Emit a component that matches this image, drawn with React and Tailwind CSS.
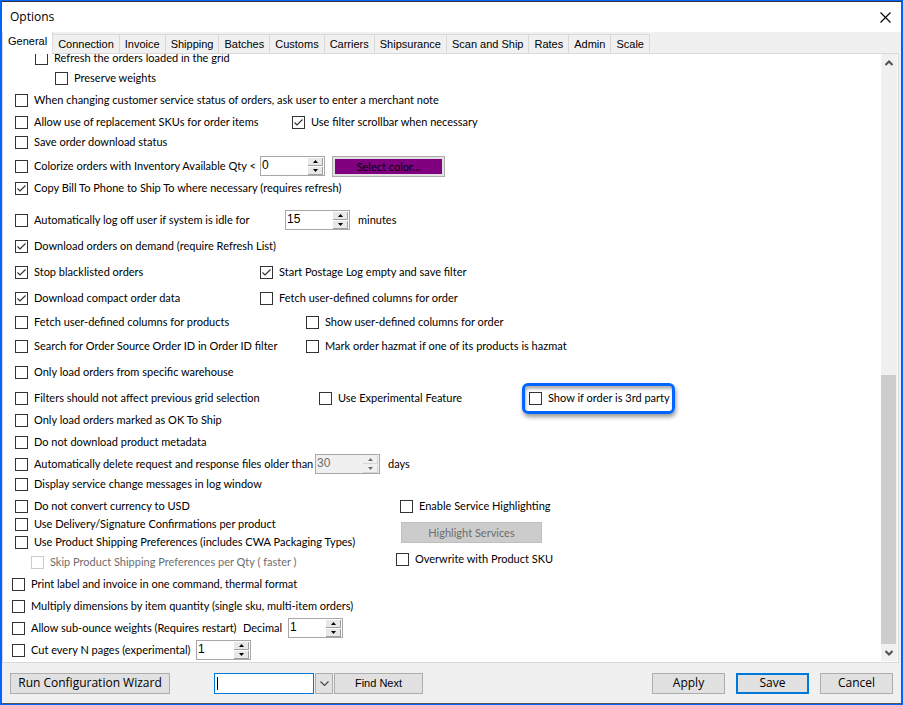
import clsx from "clsx";
import { useState } from "react";

const tabs = [
  "General",
  "Connection",
  "Invoice",
  "Shipping",
  "Batches",
  "Customs",
  "Carriers",
  "Shipsurance",
  "Scan and Ship",
  "Rates",
  "Admin",
  "Scale",
];

function Option({ label, className, checked = false, disabled = false }) {
  return (
    <label
      className={clsx(
        "flex shrink-0 items-center gap-1.5 whitespace-nowrap",
        disabled && "text-[#6d6d6d]",
        className
      )}
    >
      <span className="relative flex size-[13px]">
        <input
          type="checkbox"
          defaultChecked={checked}
          disabled={disabled}
          className="peer size-[13px] appearance-none border border-[#333333] bg-white disabled:border-[#cccccc]"
        />
        <svg
          viewBox="0 0 13 13"
          className="pointer-events-none absolute inset-0 hidden size-[13px] peer-checked:block"
          fill="none"
          stroke="#333333"
          strokeWidth="1.2"
        >
          <path d="M2.5 6.5 L5 9 L10.5 3.5" />
        </svg>
      </span>
      {label}
    </label>
  );
}

function Row({ className, children }) {
  return <div className={clsx("flex h-4 items-center", className)}>{children}</div>;
}

function Spinner({ label, value, className = "w-[65px]", disabled = false }) {
  const [count, setCount] = useState(value);
  const step =
    "flex h-2 w-[15px] items-center justify-center border-r border-b border-[#a0a0a0] bg-[#e8e8e8] disabled:border-[#d4d4d4] disabled:bg-[#f0f0f0]";

  return (
    <div
      className={clsx(
        "flex h-5 shrink-0 items-center border border-[#a7a7ab] pr-px",
        disabled ? "bg-[#f0f0f0]" : "bg-white",
        className
      )}
    >
      <input
        type="text"
        aria-label={label}
        value={count}
        disabled={disabled}
        onChange={(e) => setCount(Number(e.target.value) || 0)}
        className="w-0 flex-1 bg-transparent pb-0.5 pl-px font-['Liberation_Sans',Arial,sans-serif] text-xs leading-4 outline-none disabled:text-[#6d6d6d]"
      />
      <div className="flex flex-col gap-px">
        <button
          type="button"
          aria-label="Increase"
          disabled={disabled}
          onClick={() => setCount(count + 1)}
          className={step}
        >
          <svg viewBox="0 0 5 3" className="h-[3px] w-[5px]" fill={disabled ? "#6d6d6d" : "#000000"}>
            <path d="M0 3 L2.5 0 L5 3 Z" />
          </svg>
        </button>
        <button
          type="button"
          aria-label="Decrease"
          disabled={disabled}
          onClick={() => setCount(count - 1)}
          className={step}
        >
          <svg viewBox="0 0 5 3" className="h-[3px] w-[5px]" fill={disabled ? "#6d6d6d" : "#000000"}>
            <path d="M0 0 L2.5 3 L5 0 Z" />
          </svg>
        </button>
      </div>
    </div>
  );
}

function DialogButton({ className = "w-[73px] border border-[#adadad]", children }) {
  return (
    <button
      type="button"
      className={clsx("h-[21px] bg-[#e1e1e1] font-['Open_Sans',sans-serif] text-xs leading-4", className)}
    >
      {children}
    </button>
  );
}

function GeneralTab() {
  return (
    <div className="-mt-1 min-w-0 flex-1 font-[Lato,Arial,sans-serif]">
      <div className="pl-3">
        <Row className="pl-5">
          <Option label="Refresh the orders loaded in the grid" />
        </Row>
        <Row className="mt-1 pl-10">
          <Option label="Preserve weights" />
        </Row>
        <Row className="mt-1.5">
          <Option label="When changing customer service status of orders, ask user to enter a merchant note" />
        </Row>
        <Row className="mt-1.5">
          <Option className="w-[277px]" label="Allow use of replacement SKUs for order items" />
          <Option label="Use filter scrollbar when necessary" checked />
        </Row>
        <Row className="mt-1">
          <Option label="Save order download status" />
        </Row>
        <Row className="mt-2">
          <Option className="w-[245px]" label="Colorize orders with Inventory Available Qty <" />
          <Spinner label="Inventory available quantity" value={0} />
          <button
            type="button"
            className="ml-[7px] h-[21px] w-[113px] shrink-0 border border-[#adadad] bg-[#e1e1e1] p-0.5"
          >
            <span className="block bg-[#800080] leading-[15px]">Select color...</span>
          </button>
        </Row>
        <Row className="mt-1.5">
          <Option label="Copy Bill To Phone to Ship To where necessary (requires refresh)" checked />
        </Row>
        <Row className="mt-4">
          <Option className="w-[270px]" label="Automatically log off user if system is idle for" />
          <Spinner label="Idle minutes" value={15} />
          <span className="ml-2">minutes</span>
        </Row>
        <Row className="mt-2.5">
          <Option label="Download orders on demand (require Refresh List)" checked />
        </Row>
        <Row className="mt-2.5">
          <Option className="w-[245px]" label="Stop blacklisted orders" checked />
          <Option label="Start Postage Log empty and save filter" checked />
        </Row>
        <Row className="mt-2.5">
          <Option className="w-[245px]" label="Download compact order data" checked />
          <Option label="Fetch user-defined columns for order" />
        </Row>
        <Row className="mt-2">
          <Option className="w-[291px]" label="Fetch user-defined columns for products" />
          <Option label="Show user-defined columns for order" />
        </Row>
        <Row className="mt-2">
          <Option className="w-[291px]" label="Search for Order Source Order ID in Order ID filter" />
          <Option label="Mark order hazmat if one of its products is hazmat" />
        </Row>
        <Row className="mt-2.5">
          <Option label="Only load orders from specific warehouse" />
        </Row>
        <Row className="mt-2.5">
          <Option className="w-[304px]" label="Filters should not affect previous grid selection" />
          <Option className="w-[203px]" label="Use Experimental Feature" />
          <div className="flex h-[31px] shrink-0 items-center rounded-md border-3 border-[#0066ff] pr-0.5 pl-1 shadow-[1px_3px_4px_rgba(0,0,0,0.4),inset_1px_3px_3px_rgba(0,0,0,0.3)]">
            <Option label="Show if order is 3rd party" />
          </div>
        </Row>
        <Row className="mt-1.5">
          <Option label="Only load orders marked as OK To Ship" />
        </Row>
        <Row className="mt-1.5">
          <Option label="Do not download product metadata" />
        </Row>
        <Row className="mt-1.5">
          <Option className="w-[300px]" label="Automatically delete request and response files older than" />
          <Spinner label="Days to keep files" value={30} disabled />
          <span className="ml-2">days</span>
        </Row>
        <Row className="mt-1">
          <Option label="Display service change messages in log window" />
        </Row>
        <div className="mt-1.5 flex">
          <div className="w-[381px] shrink-0">
            <Row>
              <Option label="Do not convert currency to USD" />
            </Row>
            <Row className="mt-0.5">
              <Option label="Use Delivery/Signature Confirmations per product" />
            </Row>
            <Row className="mt-0.5">
              <Option label="Use Product Shipping Preferences (includes CWA Packaging Types)" />
            </Row>
            <Row className="mt-1 pl-4">
              <Option label="Skip Product Shipping Preferences per Qty ( faster )" disabled />
            </Row>
          </div>
          <div>
            <Row className="pl-1">
              <Option label="Enable Service Highlighting" />
            </Row>
            <button
              type="button"
              disabled
              className="mt-2 ml-[5px] block h-[21px] w-[141px] border border-[#bfbfbf] bg-[#cccccc] text-[#6d6d6d]"
            >
              Highlight Services
            </button>
            <Row className="mt-2">
              <Option label="Overwrite with Product SKU" />
            </Row>
          </div>
        </div>
      </div>
      <div className="mt-1.5 pl-[9px]">
        <Row>
          <Option label="Print label and invoice in one command, thermal format" />
        </Row>
        <Row className="mt-1.5">
          <Option label="Multiply dimensions by item quantity (single sku, multi-item orders)" />
        </Row>
        <Row className="mt-1.5">
          <Option className="w-[231px]" label="Allow sub-ounce weights (Requires restart)" />
          <span className="w-[45px] shrink-0">Decimal</span>
          <Spinner className="w-[55px]" label="Decimal places" value={1} />
        </Row>
        <Row className="mt-1.5">
          <Option className="w-[184px]" label="Cut every N pages (experimental)" />
          <Spinner className="w-[55px]" label="Pages between cuts" value={1} />
        </Row>
      </div>
    </div>
  );
}

function ScrollBar() {
  const arrow = "flex h-[17px] shrink-0 items-center justify-center";

  return (
    <div className="mr-px flex w-4 shrink-0 flex-col bg-[#f0f0f0]">
      <button type="button" aria-label="Scroll up" className={arrow}>
        <svg viewBox="0 0 8 6" className="h-1.5 w-2" fill="none" stroke="#505050" strokeWidth="2">
          <path d="M0.5 5 L4 1.5 L7.5 5" />
        </svg>
      </button>
      <div className="flex flex-1 flex-col justify-end">
        <div className="h-[47%] w-[15px] bg-[#cdcdcd]" />
      </div>
      <button type="button" aria-label="Scroll down" className={arrow}>
        <svg viewBox="0 0 8 6" className="h-1.5 w-2" fill="none" stroke="#505050" strokeWidth="2">
          <path d="M0.5 1 L4 4.5 L7.5 1" />
        </svg>
      </button>
    </div>
  );
}

export default function App() {
  const [activeTab, setActiveTab] = useState("General");
  const [query, setQuery] = useState("");

  return (
    <div className="h-screen border border-[#0066ff] bg-[#f0f0f0] font-['Liberation_Sans',Arial,sans-serif] text-[11px] leading-4 text-black">
      <div className="flex h-full flex-col overflow-hidden border border-t-[#333333] border-r-[#555555] border-b-[#555555] border-l-[#0066ff]">
        <header className="flex h-[30px] shrink-0 items-center justify-between bg-white pr-2.5 pl-2">
          <h1 className="font-['Open_Sans',sans-serif] text-xs leading-4">Options</h1>
          <button type="button" aria-label="Close">
            <svg viewBox="0 0 11 11" className="size-[11px]" fill="none" stroke="#000000" strokeWidth="1.1">
              <path d="M0.5 0.5 L10.5 10.5 M10.5 0.5 L0.5 10.5" />
            </svg>
          </button>
        </header>

        <nav role="tablist" className="relative z-10 -mb-px flex h-[22px] shrink-0 items-end">
          {tabs.map((tab) => (
            <button
              key={tab}
              type="button"
              role="tab"
              aria-selected={tab === activeTab}
              onClick={() => setActiveTab(tab)}
              className={clsx(
                "shrink-0 border-r border-[#d9d9d9] px-[5px] whitespace-nowrap",
                tab === activeTab
                  ? "h-[22px] border-l bg-white pb-1"
                  : "h-5 border-y bg-[#f0f0f0]"
              )}
            >
              {tab}
            </button>
          ))}
        </nav>

        <main className="mr-0.5 flex min-h-0 flex-1 overflow-hidden border border-[#d9d9d9] bg-white pb-px">
          <div className="flex min-w-0 flex-1 overflow-hidden">
            <GeneralTab />
          </div>
          <ScrollBar />
        </main>

        <footer className="flex h-10 shrink-0 items-center justify-between px-2">
          <div className="flex items-center">
            <DialogButton className="w-40 border border-[#adadad]">Run Configuration Wizard</DialogButton>
            <div className="ml-11 flex">
              <div className="relative">
                <input
                  type="text"
                  aria-label="Find option"
                  value={query}
                  onChange={(e) => setQuery(e.target.value)}
                  className="h-[21px] w-[100px] border border-[#0078d7] bg-white px-0.5 text-xs outline-none"
                />
                {/* resting caret while the box is empty */}
                {query === "" && (
                  <span className="pointer-events-none absolute top-1 left-[3px] h-[13px] w-px bg-black" />
                )}
              </div>
              <button
                type="button"
                aria-label="Search history"
                className="ml-px flex h-[21px] w-[18px] items-center justify-center border border-[#adadad] bg-[#e1e1e1]"
              >
                <svg viewBox="0 0 9 5" className="h-[5px] w-[9px]" fill="none" stroke="#444444" strokeWidth="1.1">
                  <path d="M0.5 0.5 L4.5 4.5 L8.5 0.5" />
                </svg>
              </button>
              <button type="button" className="ml-px h-[21px] w-[89px] border border-[#adadad] bg-[#e1e1e1]">
                Find Next
              </button>
            </div>
          </div>
          <div className="flex gap-[11px]">
            <DialogButton>Apply</DialogButton>
            <DialogButton className="w-[73px] border-2 border-[#0078d7]">Save</DialogButton>
            <DialogButton>Cancel</DialogButton>
          </div>
        </footer>
      </div>
    </div>
  );
}
